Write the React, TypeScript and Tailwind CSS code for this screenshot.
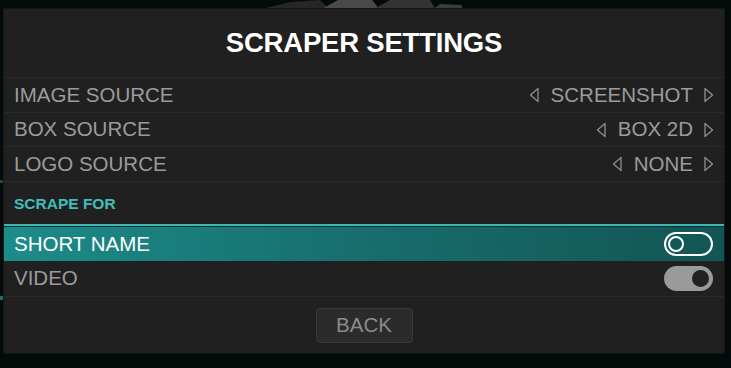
import React from "react";

const font = { fontFamily: '"Liberation Sans", Arial, sans-serif' };

const Arrow = ({ dir }: { dir: "left" | "right" }) => (
  <svg width="10" height="16" viewBox="0 0 10 16" className="shrink-0">
    <polygon
      points={dir === "left" ? "9,1.5 1.5,8 9,14.5" : "1,1.5 8.5,8 1,14.5"}
      fill="none"
      stroke="#8e8e8e"
      strokeWidth="1.3"
      strokeLinejoin="round"
    />
  </svg>
);

const Toggle = ({ on, selected }: { on: boolean; selected?: boolean }) => {
  if (selected) {
    // outline style used on the highlighted row
    return (
      <div className="flex items-center w-[49px] h-[24px] rounded-full border-2 border-white pl-[2px]">
        <div className="w-[16px] h-[16px] rounded-full border-2 border-white" />
      </div>
    );
  }
  return (
    <div
      className={`flex items-center w-[49px] h-[25px] rounded-full bg-[#9a9a9a] px-[4px] ${
        on ? "justify-end" : "justify-start"
      }`}
    >
      <div className="w-[17px] h-[17px] rounded-full bg-[#222222]" />
    </div>
  );
};

const SourceRow = ({ label, value, h }: { label: string; value: string; h: string }) => (
  <div className={`flex items-center justify-between border-t border-[#2a2a2a] pl-[10px] pr-[10px] ${h}`}>
    <span className="text-[20.5px] text-[#9b9b9b] leading-none">{label}</span>
    <div className="flex items-center gap-[12px]">
      <Arrow dir="left" />
      <span className="text-[20.5px] text-[#9b9b9b] leading-none -mr-[1px]">{value}</span>
      <Arrow dir="right" />
    </div>
  </div>
);

export default function App() {
  return (
    <div className="relative w-[731px] h-[368px] bg-[#030b0b] overflow-hidden" style={font}>
      {/* faint artwork peeking behind the dialog */}
      <svg className="absolute left-0 top-0" width="731" height="12" viewBox="0 0 731 12">
        <polygon points="258,10 290,2 320,0 330,10" fill="#262626" />
        <polygon points="320,10 338,0 372,0 380,10" fill="#4a4a4a" />
        <polygon points="372,10 390,0 430,0 436,10" fill="#333333" />
        <polygon points="432,10 440,4 462,5 462,10" fill="#3c3c3c" />
      </svg>
      <div className="absolute left-0 top-[296px] w-[3px] h-[4px] bg-[#1b6e6c]" />
      <div className="absolute left-0 top-[180px] w-[3px] h-[3px] bg-[#14504f]" />

      <div className="relative ml-[3px] mt-[8px] w-[722px] h-[346px] bg-[#202020] border border-[#161616] rounded-[2px] flex flex-col">
        <div className="h-[68px] flex items-center justify-center">
          <h1 className="text-[27.5px] font-bold text-white leading-none tracking-[-0.2px]">SCRAPER SETTINGS</h1>
        </div>

        <SourceRow label="IMAGE SOURCE" value="SCREENSHOT" h="h-[35px]" />
        <SourceRow label="BOX SOURCE" value="BOX 2D" h="h-[34px]" />
        <SourceRow label="LOGO SOURCE" value="NONE" h="h-[35px]" />

        <div className="h-[43px] flex items-center border-t border-[#2a2a2a] pl-[10px]">
          <span className="text-[15.5px] font-bold text-[#3fbfbd] leading-none pt-[1px]">SCRAPE FOR</span>
        </div>

        <div className="h-[2px] bg-[#3ab8b6]" />
        <div className="h-[35px] border-t border-[#0d2e2d] flex items-center justify-between pl-[10px] pr-[11px] bg-gradient-to-r from-[#1c8c8a] via-[#176e6d] to-[#125554]">
          <span className="text-[20.5px] text-white leading-none">SHORT NAME</span>
          <Toggle on={false} selected />
        </div>

        <div className="h-[35px] flex items-center justify-between pl-[10px] pr-[11px]">
          <span className="text-[20.5px] text-[#9b9b9b] leading-none">VIDEO</span>
          <Toggle on />
        </div>

        <div className="flex-1 border-t border-[#2a2a2a] flex justify-center pt-[11px]">
          <button className="w-[97px] h-[35px] rounded-[4px] bg-[#2b2b2b] border border-[#3a3a3a] text-[20.5px] text-[#8c8c8c] leading-none">
            BACK
          </button>
        </div>
      </div>
    </div>
  );
}
